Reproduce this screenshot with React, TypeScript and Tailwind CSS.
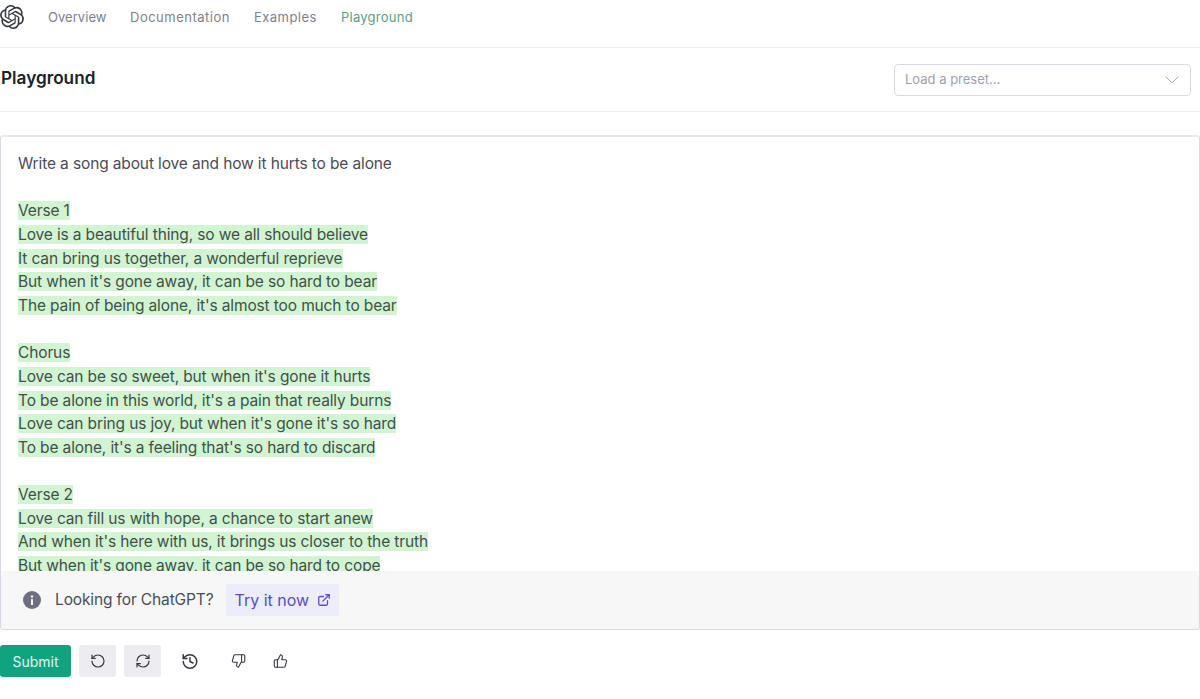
import { ChevronDown, ExternalLink, History, RefreshCw, RotateCcw, ThumbsDown, ThumbsUp } from "lucide-react";

const blocks = [
  ["Verse 1", "Love is a beautiful thing, so we all should believe", "It can bring us together, a wonderful reprieve", "But when it's gone away, it can be so hard to bear", "The pain of being alone, it's almost too much to bear"],
  ["Chorus", "Love can be so sweet, but when it's gone it hurts", "To be alone in this world, it's a pain that really burns", "Love can bring us joy, but when it's gone it's so hard", "To be alone, it's a feeling that's so hard to discard"],
  ["Verse 2", "Love can fill us with hope, a chance to start anew", "And when it's here with us, it brings us closer to the truth", "But when it's gone away, it can be so hard to cope"],
];

function Logo() {
  return (
    <svg viewBox="0 0 24 24" className="w-6 h-6 text-[#353740]" fill="currentColor">
      <path d="M22.2819 9.8211a5.9847 5.9847 0 0 0-.5157-4.9108 6.0462 6.0462 0 0 0-6.5098-2.9A6.0651 6.0651 0 0 0 4.9807 4.1818a5.9847 5.9847 0 0 0-3.9977 2.9 6.0462 6.0462 0 0 0 .7427 7.0966 5.98 5.98 0 0 0 .511 4.9107 6.051 6.051 0 0 0 6.5146 2.9001A5.9847 5.9847 0 0 0 13.2599 24a6.0557 6.0557 0 0 0 5.7718-4.2058 5.9894 5.9894 0 0 0 3.9977-2.9001 6.0557 6.0557 0 0 0-.7475-7.0729zm-9.022 12.6081a4.4755 4.4755 0 0 1-2.8764-1.0408l.1419-.0804 4.7783-2.7582a.7948.7948 0 0 0 .3927-.6813v-6.7369l2.02 1.1686a.071.071 0 0 1 .038.052v5.5826a4.504 4.504 0 0 1-4.4945 4.4944zm-9.6607-4.1254a4.4708 4.4708 0 0 1-.5346-3.0137l.142.0852 4.783 2.7582a.7712.7712 0 0 0 .7806 0l5.8428-3.3685v2.3324a.0804.0804 0 0 1-.0332.0615L9.74 19.9502a4.4992 4.4992 0 0 1-6.1408-1.6464zM2.3408 7.8956a4.485 4.485 0 0 1 2.3655-1.9728V11.6a.7664.7664 0 0 0 .3879.6765l5.8144 3.3543-2.0201 1.1685a.0757.0757 0 0 1-.071 0l-4.8303-2.7865A4.504 4.504 0 0 1 2.3408 7.872zm16.5963 3.8558L13.1038 8.364 15.1192 7.2a.0757.0757 0 0 1 .071 0l4.8303 2.7913a4.4944 4.4944 0 0 1-.6765 8.1042v-5.6772a.79.79 0 0 0-.407-.667zm2.0107-3.0231l-.142-.0852-4.7735-2.7818a.7759.7759 0 0 0-.7854 0L9.409 9.2297V6.8974a.0662.0662 0 0 1 .0284-.0615l4.8303-2.7866a4.4992 4.4992 0 0 1 6.6802 4.66zM8.3065 12.863l-2.02-1.1638a.0804.0804 0 0 1-.038-.0567V6.0742a4.4992 4.4992 0 0 1 7.3757-3.4537l-.142.0805L8.704 5.459a.7948.7948 0 0 0-.3927.6813zm1.0976-2.3654l2.602-1.4998 2.6069 1.4998v2.9994l-2.5974 1.4997-2.6067-1.4997Z" />
    </svg>
  );
}

export default function App() {
  return (
    <div className="h-[699px] w-[1200px] overflow-hidden bg-white flex flex-col font-['Inter',sans-serif]">
      <nav className="h-[48px] shrink-0 border-b border-[#ececf1] flex items-center pb-[13px]">
        <Logo />
        <div className="flex gap-6 ml-6 mt-[2px] text-[13px] tracking-[0.3px] text-[#80808d] whitespace-nowrap">
          <span className="w-[58px] tracking-[0.05px]">Overview</span>
          <span className="w-[100px] tracking-[0.5px]">Documentation</span>
          <span className="w-[63px] tracking-[0.45px]">Examples</span>
          <span className="w-[72px] tracking-[0.25px] text-[#569f88]">Playground</span>
        </div>
      </nav>
      <header className="h-[64px] shrink-0 border-b border-[#ececf1] flex items-center justify-between pr-[9px] pl-px">
        <h1 className="text-[17.2px] font-semibold text-[#202123] -mt-[3px]">Playground</h1>
        <div className="w-[297px] h-[32px] border border-[#d9d9e3] rounded flex items-center justify-between pl-[10px] pr-[6px] text-[13px] text-[#a0a0ab]">
          <span>Load a preset...</span>
          <ChevronDown className="w-[24px] h-[24px] text-[#a9a9b5]" strokeWidth={1} />
        </div>
      </header>
      <main className="mt-[23px] h-[495px] shrink-0 relative overflow-hidden border border-[#d9d9e3] border-t-2 border-t-[#e8e8ec] rounded-[3px]">
        <div className="pl-[17px] pt-[15px] text-[15.5px] tracking-[-0.13px] leading-[23.65px] text-[#4b4c57] whitespace-pre">
          <div>Write a song about love and how it hurts to be alone</div>
          {blocks.map((b, i) => (
            <div key={i} className="mt-[23.65px] text-[#3e5247]">
              {b.map((l, j) => (
                <div key={j}><span className="bg-[#d2f4d3]">{l}</span></div>
              ))}
            </div>
          ))}
        </div>
        <div className="absolute left-0 right-0 bottom-0 h-[58px] bg-[#f7f7f8] flex items-center pl-[22px]">
          <svg viewBox="0 0 18 18" className="w-[18px] h-[18px]">
            <circle cx="9" cy="9" r="9" fill="#6e6e80" />
            <rect x="8" y="8" width="2" height="6" rx="0.6" fill="#f7f7f8" />
            <circle cx="9" cy="5.5" r="1.2" fill="#f7f7f8" />
          </svg>
          <span className="ml-[14px] text-[15.5px] tracking-[-0.13px] text-[#4b4c57]">Looking for ChatGPT?</span>
          <span className="ml-[13px] h-[32px] w-[113px] bg-[#ececfa] rounded-[3px] flex items-center pl-[8px] text-[16px] text-[#5a4fb8]">
            Try it now
            <ExternalLink className="w-[14px] h-[14px] ml-[8px] text-[#5a4fc8]" strokeWidth={2.2} />
          </span>
        </div>
      </main>
      <div className="flex items-center mt-[15px] text-[#353740]">
        <button className="w-[71px] h-[32px] rounded-[3px] bg-[#10a37f] text-[#e3f5f0] text-[14px]">Submit</button>
        <span className="ml-[8px] w-[37px] h-[32px] rounded-[3px] bg-[#ececf1] flex items-center justify-center"><RotateCcw className="w-[16px] h-[16px]" strokeWidth={1.75} /></span>
        <span className="ml-[8px] w-[37px] h-[32px] rounded-[3px] bg-[#ececf1] flex items-center justify-center"><RefreshCw className="w-[16px] h-[16px]" strokeWidth={1.75} /></span>
        <span className="ml-[20px] w-[18px] flex justify-center"><History className="w-[19px] h-[19px]" strokeWidth={2} /></span>
        <span className="ml-[32px] w-[15px] flex justify-center"><ThumbsDown className="w-[16px] h-[16px]" strokeWidth={1.75} /></span>
        <span className="ml-[27px] w-[15px] flex justify-center"><ThumbsUp className="w-[16px] h-[16px]" strokeWidth={1.75} /></span>
      </div>
    </div>
  );
}
